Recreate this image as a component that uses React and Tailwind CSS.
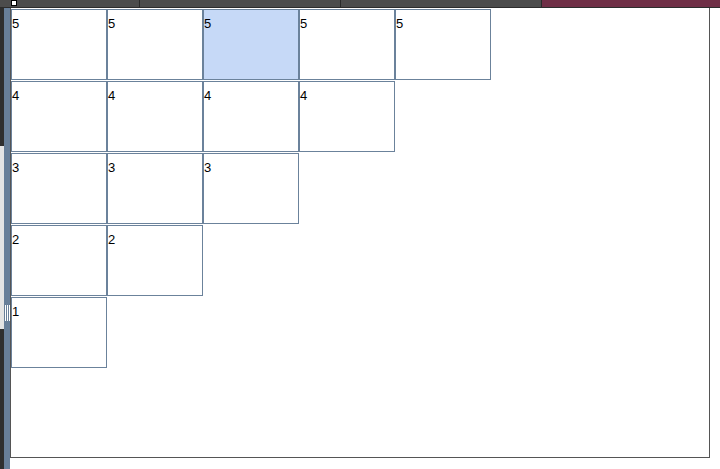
const ROWS = [5, 4, 3, 2, 1];

function Cell({ n, active }) {
  return (
    <div
      className={`w-[96px] h-[71px] border border-[#6b829b] text-[13px] leading-[15px] text-black pt-[6px] ${
        active ? "bg-[#c6d9f7]" : "bg-white"
      }`}
    >
      {n}
    </div>
  );
}

export default function App() {
  return (
    <div className="relative w-[720px] h-[469px] bg-white overflow-hidden font-['Liberation_Sans',Arial,sans-serif]">
      {/* top tab strip */}
      <div className="flex h-[8px] border-b border-[#2c2c2c]">
        <div className="w-[140px] bg-[#4c4c4c] border-r border-[#2a2a2a]" />
        <div className="w-[201px] bg-[#4c4c4c] border-r border-[#2a2a2a]" />
        <div className="w-[201px] bg-[#4c4c4c] border-r border-[#2a2a2a]" />
        <div className="flex-1 bg-[#6f2e46]" />
      </div>
      <div className="absolute left-[11px] top-0 w-[6px] h-[6px] bg-white border border-black" />

      <div className="flex h-[461px]">
        {/* left edge */}
        <div className="w-[4px] flex flex-col">
          <div className="h-[138px] bg-[#2f2f2f]" />
          <div className="h-[183px] bg-[#e4e4e4]" />
          <div className="flex-1 bg-[#2f2f2f]" />
        </div>
        <div className="w-[6px] bg-[#687f99] flex flex-col">
          <div className="h-[297px]" />
          <div className="h-[16px] flex justify-center gap-[1px]">
            <div className="w-[1px] bg-white" />
            <div className="w-[1px] bg-white" />
            <div className="w-[1px] bg-white" />
          </div>
        </div>

        {/* panel */}
        <div className="w-[700px] h-[450px] border-l border-r border-b border-[#555555] pt-[1px] flex flex-col gap-[1px]">
          {ROWS.map((n) => (
            <div key={n} className="flex">
              {Array.from({ length: n }).map((_, i) => (
                <Cell key={i} n={n} active={n === 5 && i === 2} />
              ))}
            </div>
          ))}
        </div>
      </div>
    </div>
  );
}
